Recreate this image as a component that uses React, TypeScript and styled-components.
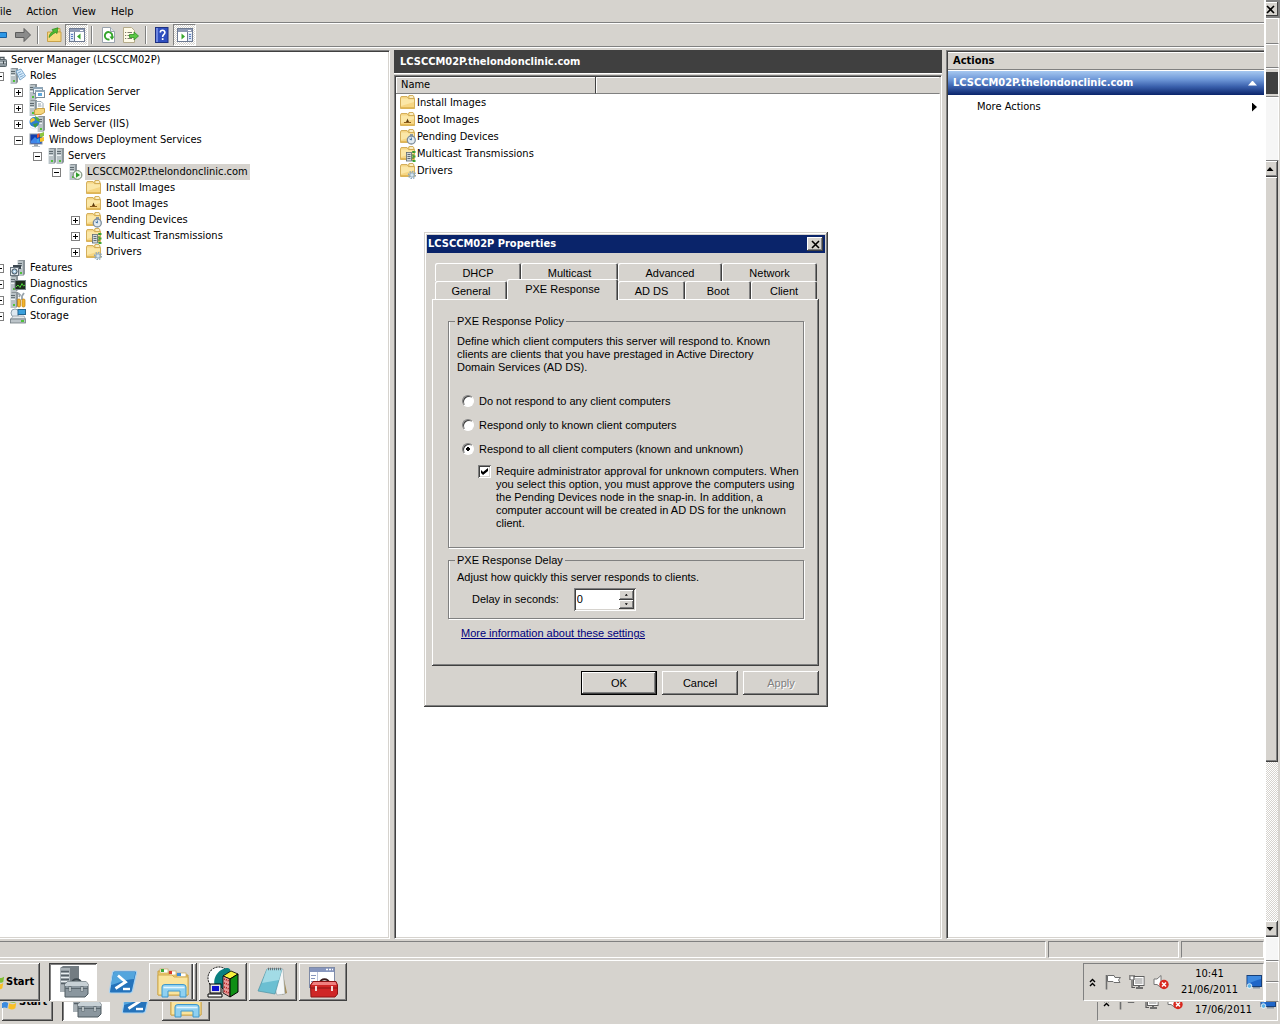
import React, { useId, useState } from "react";
import styled, { createGlobalStyle, css } from "styled-components";

/* ---------- theme ---------- */

const face = "#d6d3ce";
const shadow = "#808080";
const dark = "#404040";
const uiFont = `"DejaVu Sans Condensed", "DejaVu Sans", sans-serif`;
const dialogFont = `"Liberation Sans", Arial, sans-serif`;

const raised = css`
  box-shadow: inset -1px -1px 0 ${dark}, inset 1px 1px 0 #fff, inset -2px -2px 0 ${shadow};
`;
const sunkenThin = css`
  border: 1px solid;
  border-color: ${shadow} #fff #fff ${shadow};
`;
const checker = css`
  background: repeating-conic-gradient(#fff 0% 25%, ${face} 0% 50%) 0 0 / 2px 2px;
`;

const GlobalStyle = createGlobalStyle`
  *, *::before, *::after { box-sizing: border-box; }
  body {
    margin: 0;
    background: ${face};
    color: #000;
    font: 11px/16px ${uiFont};
  }
  button, input { font: inherit; color: inherit; }
  ul { list-style: none; margin: 0; padding: 0; }
  svg { display: block; flex: none; }
`;

/* ---------- icons ---------- */

type IconProps = { size?: number };

const Svg = ({ size = 16, box = 16, children }: { size?: number; box?: number; children: React.ReactNode }) => (
  <svg width={size} height={size} viewBox={`0 0 ${box} ${box}`} aria-hidden="true">
    {children}
  </svg>
);

const Tower = ({ x = 0, y = 0 }: { x?: number; y?: number }) => (
  <g transform={`translate(${x} ${y})`}>
    <path d="M0 1 L2 0 H8 V14 L6 16 H0Z" fill="#8b9499" />
    <rect x="0" y="1" width="6" height="15" fill="#b9c2c6" />
    <rect x="0" y="1" width="1" height="15" fill="#dfe6e8" />
    <rect x="1" y="3" width="4" height="1" fill="#5d686e" />
    <rect x="1" y="5" width="4" height="1" fill="#6d787e" />
    <rect x="1" y="7" width="4" height="1" fill="#eef2f3" />
    <rect x="3" y="12" width="2" height="2" fill="#4fc23a" />
  </g>
);

const FolderBase = () => (
  <>
    <path d="M8 4 V2 L9 .5 H13 L14 2 V5 H8Z" fill="#f3d98a" stroke="#c9a24a" strokeWidth=".8" />
    <rect x="10" y="1.500" width="3" height="1" fill="#fff" />
    <path d="M.5 3 L1.2 1.500 H7 L8.500 3.500 H14.500 V13.500 H.5Z" fill="#f6d684" stroke="#cfa850" strokeWidth=".9" />
    <path d="M1 3.500 H8 L8.500 4.500 H14 V7 L1 11Z" fill="#fdebb0" opacity=".8" />
    <path d="M1 13.500 H14.500 V12 H1Z" fill="#e3b957" />
  </>
);

const FolderIcon = () => <Svg><FolderBase /></Svg>;
const BootFolderIcon = () => (
  <Svg>
    <FolderBase />
    <path d="M7.5 6.5 L9 10 H6Z" fill="#5b3a10" />
    <rect x="4" y="10" width="7" height="1" fill="#8a5a18" />
  </Svg>
);
const PendingFolderIcon = () => (
  <Svg>
    <FolderBase />
    <rect x="10" y="5" width="3" height="2" fill="#8a98a4" />
    <circle cx="11.3" cy="11" r="4" fill="#e1eaf1" stroke="#7d8d9c" strokeWidth="1.3" />
    <path d="M11.3 8.5 V11 L9.5 10" stroke="#3b6da0" fill="none" />
  </Svg>
);
const MulticastFolderIcon = () => (
  <Svg>
    <FolderBase />
    <rect x="6.500" y="6.500" width="5" height="8.500" fill="#d3d9dc" stroke="#5f6b72" strokeWidth=".8" />
    <path d="M7.500 8.500 H10.500 M7.500 10.500 H10.500 M7.500 12.500 H10.500" stroke="#5f6b72" />
    <path d="M12.500 6 H15.500 M12.500 10.500 H15.500 M12.500 15 H15.500" stroke="#3fa534" strokeWidth="2" />
    <path d="M13 5 V15" stroke="#2d7f26" strokeDasharray="2 1" />
  </Svg>
);
const DriversFolderIcon = () => (
  <Svg>
    <FolderBase />
    <circle cx="12" cy="12" r="3.4" fill="none" stroke="#8aa7be" strokeWidth="1.4" strokeDasharray="1.5 1.1" />
    <circle cx="12" cy="12" r="2.2" fill="#d5e4ef" stroke="#8aa7be" />
  </Svg>
);
const ServerManagerIcon = () => (
  <Svg>
    <rect x="1" y="1" width="6" height="11" fill="#a7b0b5" />
    <path d="M9 7 V5.5 H13 V7" fill="none" stroke="#4f5a60" strokeWidth="1.3" />
    <rect x="5.5" y="7.5" width="10" height="7" rx="1" fill="#8d989e" stroke="#59646a" />
    <path d="M6 10.5 H15" stroke="#c9d1d5" />
    <path d="M8.5 9 V12 M12.5 9 V12" stroke="#414b50" />
  </Svg>
);
const RolesIcon = () => (
  <Svg>
    <Tower />
    <path d="M6 3 L11 1 L15.5 8 L10 12Z" fill="#d9ecfb" stroke="#6f9fc8" strokeWidth=".9" />
    <path d="M8 5 L11 3.5 M9 7 L12.5 5.5 M10 9 L13.5 7.5" stroke="#6f9fc8" strokeWidth=".9" />
  </Svg>
);
const AppServerIcon = () => (
  <Svg>
    <Tower />
    <rect x="4.5" y="3.5" width="9" height="6" fill="#eef5fa" stroke="#7b8d9b" />
    <rect x="4" y="3" width="10" height="2" fill="#8fa6b8" />
    <rect x="6.5" y="6.5" width="9" height="7" fill="#fff" stroke="#7b8d9b" />
    <rect x="6" y="6" width="10" height="2" fill="#8fa6b8" />
    <rect x="9" y="9" width="4" height="3" fill="#5ea9de" />
  </Svg>
);
const FileServicesIcon = () => (
  <Svg>
    <Tower />
    <path d="M7.5 1.5 H12 L14 3.5 V10 H7.5Z" fill="#fff" stroke="#90a0ac" strokeWidth=".9" />
    <path d="M9 4 H12 M9 6 H12.5" stroke="#90a0ac" />
    <path d="M5.5 10 L9 8.500 H15.5 V12.500 L12 14.5 H5.5Z" fill="#f6d67c" stroke="#c39a3c" strokeWidth=".9" />
  </Svg>
);
const WebServerIcon = () => (
  <Svg>
    <Tower x={8} />
    <circle cx="5.5" cy="6" r="5" fill="#2c7fd0" />
    <path d="M2 3 C4 1 6 2 6 4 C5 6 3 5 2 7 C1 6 1 4 2 3Z" fill="#f6c635" />
    <path d="M6 0 C9 1 11 3 10.5 6 L7 4Z" fill="#4fae3c" />
    <path d="M4 8 L9 7 L8 10 L6 12Z" fill="#3c9a46" />
    <path d="M1 11 C5 14 8 13 9 11" stroke="#dfe9f2" fill="none" />
  </Svg>
);
const WdsIcon = () => (
  <Svg>
    <rect x="1" y="2" width="12" height="10" fill="#123fae" stroke="#8d9aa8" />
    <path d="M2 9 L6 5 L12 11 H2Z" fill="#3f86ea" />
    <path d="M8 2.5 L10.5 1 V5 L8 6Z" fill="#e8542c" />
    <path d="M11 1.5 L15 0 V4 L11 5.5Z" fill="#8cc63e" />
    <path d="M8 7 L10.5 6 V10 L8 10.5Z" fill="#3fa3ea" />
    <path d="M11 6 L15 5 V9 L11 10Z" fill="#f8c22c" />
    <rect x="5" y="12" width="4" height="2" fill="#98a3ad" />
    <rect x="3" y="14" width="8" height="1" fill="#b9c2c9" />
  </Svg>
);
const ServersIcon = () => (
  <Svg>
    <Tower />
    <Tower x={8} />
  </Svg>
);
const HostIcon = () => (
  <Svg>
    <Tower x={2} />
    <circle cx="10.5" cy="11" r="4.4" fill="#eef8ec" stroke="#6b7f6b" />
    <path d="M9 8.3 L13 11 L9 13.7Z" fill="#2c9c28" />
  </Svg>
);
const FeaturesIcon = () => (
  <Svg>
    <Tower x={7} />
    <rect x="3" y="5" width="8" height="4" fill="#3c4750" />
    <rect x=".5" y="7.5" width="8" height="8" fill="#e5eaee" stroke="#66737d" />
    <circle cx="4.5" cy="11.5" r="2.6" fill="#a9cbe3" stroke="#3d4b56" />
    <circle cx="4.5" cy="11.5" r=".8" fill="#fff" />
  </Svg>
);
const DiagnosticsIcon = () => (
  <Svg>
    <Tower />
    <rect x="5" y="4.500" width="10.500" height="9" fill="#1c2b1c" stroke="#7a868c" />
    <path d="M6 11 L8 9 L10 11.5 L12 7.5 L13.5 10 L15 9" fill="none" stroke="#4ed43a" />
  </Svg>
);
const ConfigurationIcon = () => (
  <Svg>
    <Tower />
    <path d="M8 1 L10 3 L9 5 M14 1 L12 4 V8" stroke="#98a3aa" strokeWidth="1.8" fill="none" />
    <rect x="7.5" y="7" width="3" height="8" rx="1.2" fill="#f4b52c" stroke="#b97d12" strokeWidth=".7" />
    <rect x="12" y="7" width="3" height="8" rx="1.2" fill="#f4b52c" stroke="#b97d12" strokeWidth=".7" />
  </Svg>
);
const StorageIcon = () => (
  <Svg>
    <circle cx="5" cy="5" r="4" fill="#dfe9f0" stroke="#8fa1ad" />
    <rect x="8" y="1.5" width="7.5" height="5" fill="#3aa0dc" stroke="#24668f" />
    <path d="M1 11 L3 8 H14 L15.5 11Z" fill="#e4e8ea" stroke="#8d979d" strokeWidth=".7" />
    <rect x=".5" y="11" width="15" height="4" fill="#bcc4c9" stroke="#6e7a81" strokeWidth=".8" />
    <rect x="11" y="12" width="3" height="2" fill="#4fc23a" />
  </Svg>
);

/* toolbar icons */
const BackIcon = () => (
  <Svg><path d="M1 8 L7 2 V5.5 H14.5 V10.5 H7 V14Z" fill="#2d97e6" stroke="#1a5fa0" /></Svg>
);
const ForwardIcon = () => (
  <Svg><path d="M15.5 8 L9 1.500 V5.5 H.5 V10.5 H9 V14.500Z" fill="#8b8b8b" stroke="#5c5c5c" /></Svg>
);
const UpFolderIcon = () => (
  <Svg>
    <path d="M9 4 V2.500 L10 1.5 H14 V5 H9Z" fill="#f3d98a" stroke="#c9a24a" />
    <path d="M1.5 5 H15 V14.5 H1.5Z" fill="#f8d880" stroke="#c9a24a" />
    <path d="M3 10.500 C3.500 7 5 5 7.500 4.500 L6 2.500 L12 .8 L11 6.500 L9.500 5.500 C7 6.500 5.500 8.500 3 10.500Z" fill="#4dbb34" stroke="#2c8a1e" strokeWidth=".7" />
  </Svg>
);
const PaneIcon = ({ right }: { right?: boolean }) => (
  <Svg>
    <rect x=".5" y="1.5" width="15" height="13" fill="#fff" stroke="#6f7b93" />
    <rect x="1" y="2" width="14" height="3" fill="#8f9bb5" />
    <rect x="11" y="3" width="3" height="1" fill="#fff" />
    <rect x={right ? 11 : 1} y="6" width="4" height="8" fill="#dde7f5" />
    <path d={right ? "M10.5 5 V14" : "M5.5 5 V14"} stroke="#6f7b93" />
    <path d={right ? "M12 7.5 H14 M12 9.5 H14 M12 11.5 H14" : "M2 7.5 H4 M2 9.5 H4 M2 11.5 H4"} stroke="#5d7fc4" />
    <path d={right ? "M4.500 6.5 L8 9.5 L4.500 12.5Z" : "M11.5 6.5 L8 9.5 L11.5 12.5Z"} fill="#38a82c" />
  </Svg>
);
const RefreshIcon = () => (
  <Svg>
    <path d="M2.5 .5 H10.5 L14.5 4.5 V15.5 H2.5Z" fill="#fff" stroke="#9aa3ad" />
    <path d="M10.5 .5 V4.5 H14.5" fill="#e2e7ec" stroke="#9aa3ad" />
    <path d="M9.500 12.300 A3.700 3.700 0 1 1 12 10" fill="none" stroke="#35a52c" strokeWidth="1.9" />
    <path d="M9.500 9.500 H14.300 L12 13Z" fill="#35a52c" />
  </Svg>
);
const ExportIcon = () => (
  <Svg>
    <path d="M.5 .5 H8.5 L11.5 3.5 V15.5 H.5Z" fill="#fffbe8" stroke="#b5ab8a" />
    <path d="M2 5.5 H3.2 M4.5 5.5 H9 M2 8.5 H3.2 M4.5 8.5 H7 M2 11.5 H3.2 M4.5 11.5 H9" stroke="#7d7a6c" />
    <path d="M6.5 7.5 H11 V5 L15.5 9 L11 13 V10.5 H6.5Z" fill="#5cc845" stroke="#2f8f22" strokeWidth=".8" />
  </Svg>
);
const HelpIcon = () => (
  <Svg>
    <rect x="1.500" y=".5" width="12.500" height="15" fill="#2f4fc0" stroke="#1c2f80" />
    <rect x="2" y="1" width="2" height="14" fill="#6d86e0" />
    <path d="M6.3 5.5 C6.3 2.6 10.900 2.6 10.900 5.4 C10.900 7.4 8.600 7.4 8.600 10" fill="none" stroke="#fff" strokeWidth="1.6" />
    <rect x="7.800" y="11.2" width="1.7" height="1.8" fill="#fff" />
  </Svg>
);

/* taskbar icons */
const ServerToolboxIcon = ({ size = 32 }: IconProps) => (
  <Svg size={size} box={32}>
    <path d="M3 2 L6 0 H22 V22 L18 26 H3Z" fill="#737c82" />
    <rect x="3" y="2" width="10" height="24" fill="#a9b1b6" />
    <path d="M4 5.5 H12 M4 9.5 H12 M4 13.5 H12 M4 17.5 H12" stroke="#566067" strokeWidth="1.5" />
    <path d="M4 7.5 H12 M4 11.5 H12 M4 15.5 H12" stroke="#e8edef" />
    <path d="M15 17 C15 12 24 12 24 17" fill="none" stroke="#3e484e" strokeWidth="2" />
    <path d="M8 18 L11 15.500 H29 L31 18 V28 L28 31 H8Z" fill="#8a969e" stroke="#4e5a61" />
    <path d="M8 18 L11 15.500 H29 L31 18 V20 H8Z" fill="#c8d1d6" />
    <path d="M8 22.5 H31" stroke="#5b676e" />
    <rect x="12" y="20.500" width="2" height="5" fill="#e4eaec" stroke="#4e5a61" strokeWidth=".6" />
    <rect x="24" y="20.500" width="2" height="5" fill="#e4eaec" stroke="#4e5a61" strokeWidth=".6" />
  </Svg>
);
const PowerShellIcon = ({ size = 32 }: IconProps) => (
  <Svg size={size} box={32}>
    <path d="M7.5 5 H28 Q30 5 29.5 7 L25.5 25 Q25 27 23 27 H4 Q2 27 2.5 25 L5.5 7 Q6 5 7.5 5Z" fill="#2573bb" stroke="#a9d3f2" strokeWidth="1.2" />
    <path d="M7.5 6 H28.4 L27 13 C19 13 12 17 4 19 L6.4 7Z" fill="#5fb1e6" opacity=".8" />
    <path d="M11 9.5 L18.5 16 L8.5 22.5" fill="none" stroke="#fff" strokeWidth="2.8" />
    <path d="M16 23 H23" stroke="#fff" strokeWidth="2.4" />
  </Svg>
);
const ExplorerIcon = ({ size = 32 }: IconProps) => (
  <Svg size={size} box={32}>
    <path d="M1 5 H9 L11 7 H17 L19 9 H31 V29 H1Z" fill="#efce72" stroke="#c79f45" />
    <rect x="3" y="3" width="8" height="4" fill="#fff" stroke="#c79f45" strokeWidth=".6" />
    <rect x="4" y="3" width="3" height="3" fill="#38a838" />
    <rect x="12" y="5" width="7" height="4" fill="#fff" stroke="#c79f45" strokeWidth=".6" />
    <rect x="12" y="5" width="3" height="3" fill="#d83a2a" />
    <rect x="20" y="7" width="9" height="4" fill="#fff" stroke="#c79f45" strokeWidth=".6" />
    <rect x="20" y="7" width="4" height="3" fill="#3b8ddc" />
    <path d="M1 9 H15 L17 11 H31 V29 H1Z" fill="#fae49d" stroke="#d0aa50" />
    <path d="M5 31 V21 Q5 18.5 8 18.5 H26 Q29 18.5 29 21 V31 H23 V25 H11 V31Z" fill="#8fd0f0" stroke="#3f98cc" />
    <path d="M6.5 21.5 H27.5" stroke="#e3f6ff" strokeWidth="1.6" />
  </Svg>
);
const MmcIcon = ({ size = 32 }: IconProps) => (
  <Svg size={size} box={32}>
    <circle cx="12" cy="12" r="11" fill="#fff" stroke="#000" strokeDasharray="2 1" />
    <path d="M8 20 C5 12 12 2 21 2 C27 4 20 10 20 14 V22 H10Z" fill="#0b8080" />
    <path d="M16 10 L24 5 L31 8 L23 13Z" fill="#f6f23c" stroke="#000" strokeWidth=".8" />
    <path d="M16 10 L23 13 V31 L16 27Z" fill="#e89a9a" stroke="#000" strokeWidth=".8" />
    <path d="M17 13 L22 15 M17 17 L22 19 M17 21 L22 23 M17 25 L22 27" stroke="#b01818" strokeWidth="1.6" strokeDasharray="1 1" />
    <path d="M23 13 L31 8 V26 L23 31Z" fill="#0f8f14" stroke="#000" />
    <rect x="3" y="18" width="11" height="9" fill="#e4e4e4" stroke="#000" />
    <rect x="5" y="20" width="7" height="5" fill="#1010d0" />
    <path d="M1 28 H15 V31 H1Z" fill="#fff" stroke="#000" />
  </Svg>
);
const NotepadIcon = ({ size = 32 }: IconProps) => (
  <Svg size={size} box={32}>
    <path d="M25 4 L30 27 L25 29Z" fill="#a28a54" />
    <path d="M11 3 H26 L28 28 L20 29Z" fill="#f4f6f7" stroke="#9ba5aa" strokeWidth=".6" />
    <path d="M10 3 H25 L18 28 L1 25Z" fill="#6bbfd2" stroke="#4f92a4" strokeWidth=".7" />
    <path d="M10 3 H25 L22 14 L5 17Z" fill="#b4e4ec" opacity=".75" />
    <path d="M11 3 H25" stroke="#6b7277" strokeWidth="2.4" strokeDasharray="1 1" />
  </Svg>
);
const RedToolboxIcon = ({ size = 32 }: IconProps) => (
  <Svg size={size} box={32}>
    <rect x="2.5" y="1.5" width="25" height="20" fill="#fff" stroke="#7e8aa6" />
    <rect x="3" y="2" width="24" height="4" fill="#8796bd" />
    <path d="M19 3.5 H21 M22 3.5 H24 M25 3.5 H26" stroke="#fff" strokeWidth="1.4" />
    <path d="M4 9.5 H9 M4 12.5 H8 M4 15.5 H9" stroke="#8796bd" />
    <path d="M10.5 6 V20" stroke="#bcc5da" />
    <path d="M13 17 C13 12 22 12 22 17" fill="none" stroke="#3a1d1d" strokeWidth="2" />
    <path d="M3.500 19 L6 15.500 H29 L30.500 19 V28 L28 31 H4Z" fill="#cf2626" stroke="#8c1414" />
    <path d="M4.500 19 L6.500 16 H28.500 L29.500 19Z" fill="#f08080" />
    <path d="M4 22 H30" stroke="#8c1414" />
    <rect x="8" y="20" width="2" height="5" fill="#f2dcdc" />
    <rect x="24" y="20" width="2" height="5" fill="#f2dcdc" />
  </Svg>
);
const StartLogo = () => (
  <Svg size={16} box={18}>
    <path d="M1 3 C4 1 6 2 8 3 L7 9 C5 8 3 7 0 9Z" fill="#e8502a" />
    <path d="M9 3.5 C12 5 14 5 17 3 L16 9 C13 10.500 11 10 8 9Z" fill="#7fbf35" />
    <path d="M0 10 C3 8.500 5 9 7 10 L6 16 C4 15 2 14.500 0 16Z" fill="#3c8be0" />
    <path d="M8 10.500 C11 12 13 12 16 10 L15 16 C12 18 9 17.500 7 16Z" fill="#f9bf26" />
  </Svg>
);

/* tray icons */
const ChevronsIcon = () => (
  <Svg size={9} box={9}>
    <path d="M2 4 L4.500 1.500 L7 4 M2 8 L4.500 5.500 L7 8" fill="none" stroke="#000" strokeWidth="1.400" />
  </Svg>
);
const FlagIcon = () => (
  <Svg>
    <path d="M1.500 1 V15.500" stroke="#6e6e6e" strokeWidth="1.600" />
    <path d="M2.500 1.500 H9 L10 3.500 H15.500 L13.500 6 L15 8.500 H9 L8 7.500 H2.500Z" fill="#fff" stroke="#6e6e6e" />
  </Svg>
);
const NetworkIcon = () => (
  <Svg>
    <rect x="4.500" y="2.500" width="10.500" height="9" fill="#c4c4c4" stroke="#5f5f5f" />
    <rect x="5.500" y="3.500" width="8.500" height="7" fill="none" stroke="#fff" />
    <path d="M7 14 H14" stroke="#6e6e6e" strokeWidth="2" />
    <path d="M10 12 V14" stroke="#6e6e6e" strokeWidth="2" />
    <path d="M1 1 V5.500 H5 V1 M3 1 V13.500 H6" fill="none" stroke="#555" strokeWidth="1.200" />
    <rect x="1.600" y="2.500" width="2.800" height="3" fill="#fff" />
  </Svg>
);
const VolumeIcon = () => (
  <Svg>
    <path d="M1 5 H4 L8 1.500 V13.500 L4 10.500 H1Z" fill="#fff" stroke="#777" />
    <circle cx="11" cy="10.500" r="4.700" fill="#d8281e" />
    <path d="M9 8.500 L13 12.500 M13 8.500 L9 12.500" stroke="#fff" strokeWidth="1.500" />
  </Svg>
);
const DesktopIcon = () => (
  <Svg>
    <rect x="1" y="1.500" width="14.500" height="11" fill="#1f66c8" stroke="#173f78" />
    <path d="M1.500 2 H15 V5 C10 6 6 8 1.500 10Z" fill="#3f8ae0" />
    <circle cx="3.500" cy="12" r="2.300" fill="#5fb6e8" stroke="#fff" strokeWidth=".8" />
    <rect x="7" y="13" width="7" height="1.500" fill="#8b97a3" />
  </Svg>
);

/* ---------- shell ---------- */

const Desktop = styled.div`
  display: grid;
  grid-template-columns: minmax(0, 1fr) 16px;
  grid-template-rows: minmax(0, 1fr) 22px;
  height: 100vh;
  min-height: 740px;
  overflow: hidden;
`;

const Session = styled.main`
  display: flex;
  flex-direction: column;
  min-width: 0;
  overflow: hidden;
  background: ${face};
`;

const MenuBar = styled.nav`
  display: flex;
  align-items: center;
  gap: 15px;
  height: 24px;
  margin-left: -5px;
  border-bottom: 1px solid #fff;
  box-shadow: inset 0 -1px 0 ${shadow};
`;

const MenuItem = styled.button`
  padding: 0;
  border: 0;
  background: none;
`;

const ToolBar = styled.div`
  display: flex;
  align-items: center;
  height: 24px;
  padding-bottom: 2px;
  margin-left: -12px;
  border-bottom: 1px solid #fff;
  box-shadow: inset 0 -1px 0 ${shadow};
`;

const ToolButton = styled.button<{ $on?: boolean }>`
  display: grid;
  place-items: center;
  width: 23px;
  height: 22px;
  padding: 0;
  border: 1px solid transparent;
  background: none;
  ${(p) =>
    p.$on &&
    css`
      ${checker}
      border-color: ${shadow} #fff #fff ${shadow};
    `}
`;

const ToolSeparator = styled.span`
  width: 8px;
  height: 18px;
  display: flex;
  justify-content: center;
  &::before {
    content: "";
    width: 2px;
    background: ${shadow};
    border-right: 1px solid #fff;
  }
`;

const Panes = styled.div`
  flex: 1;
  display: grid;
  grid-template-columns: 390px minmax(0, 1fr) 318px;
  gap: 4px;
  min-height: 0;
  padding-top: 2px;
`;

const Pane = styled.section`
  display: flex;
  flex-direction: column;
  min-width: 0;
  padding: 1px;
  overflow: hidden;
  background: #fff;
  border: 1px solid;
  border-color: ${shadow} #fff #fff ${shadow};
  box-shadow: inset 1px 1px 0 ${dark}, inset -1px -1px 0 ${face};
`;

const TreePane = styled(Pane)`
  border-left: 0;
  padding-left: 0;
  box-shadow: inset 0 1px 0 ${dark}, inset -1px -1px 0 ${face};
`;

const ActionsPane = styled(Pane)`
  border-right: 0;
  padding-right: 0;
  box-shadow: inset 1px 1px 0 ${dark}, inset 0 -1px 0 ${face};
`;

/* ---------- tree ---------- */

const TreeRoot = styled.ul`
  margin-left: -28px;
`;
const Branch = styled.ul`
  padding-left: 19px;
`;
const TreeRow = styled.div`
  display: flex;
  align-items: center;
  height: 16px;
`;
const ExpanderSlot = styled.span`
  display: flex;
  width: 19px;
  padding-left: 4px;
`;
const Expander = styled.button<{ $open?: boolean }>`
  width: 9px;
  height: 9px;
  padding: 0;
  border: 1px solid ${shadow};
  background: linear-gradient(#000, #000) center / 5px 1px no-repeat,
    linear-gradient(#000, #000) center / ${(p) => (p.$open ? "0 0" : "1px 5px")} no-repeat, #fff;
`;
const TreeLabel = styled.span<{ $selected?: boolean }>`
  height: 16px;
  padding: 0 2px;
  margin-left: 2px;
  white-space: nowrap;
  background: ${(p) => (p.$selected ? face : "transparent")};
`;

type Node = {
  label: string;
  icon: React.ReactNode;
  expandable?: boolean;
  selected?: boolean;
  children?: Node[];
};

const tree: Node = {
  label: "Server Manager (LCSCCM02P)",
  icon: <ServerManagerIcon />,
  children: [
    {
      label: "Roles",
      icon: <RolesIcon />,
      expandable: true,
      children: [
        { label: "Application Server", icon: <AppServerIcon />, expandable: true },
        { label: "File Services", icon: <FileServicesIcon />, expandable: true },
        { label: "Web Server (IIS)", icon: <WebServerIcon />, expandable: true },
        {
          label: "Windows Deployment Services",
          icon: <WdsIcon />,
          expandable: true,
          children: [
            {
              label: "Servers",
              icon: <ServersIcon />,
              expandable: true,
              children: [
                {
                  label: "LCSCCM02P.thelondonclinic.com",
                  icon: <HostIcon />,
                  expandable: true,
                  selected: true,
                  children: [
                    { label: "Install Images", icon: <FolderIcon /> },
                    { label: "Boot Images", icon: <BootFolderIcon /> },
                    { label: "Pending Devices", icon: <PendingFolderIcon />, expandable: true },
                    { label: "Multicast Transmissions", icon: <MulticastFolderIcon />, expandable: true },
                    { label: "Drivers", icon: <DriversFolderIcon />, expandable: true },
                  ],
                },
              ],
            },
          ],
        },
      ],
    },
    { label: "Features", icon: <FeaturesIcon />, expandable: true },
    { label: "Diagnostics", icon: <DiagnosticsIcon />, expandable: true },
    { label: "Configuration", icon: <ConfigurationIcon />, expandable: true },
    { label: "Storage", icon: <StorageIcon />, expandable: true },
  ],
};

const TreeItem = ({ node }: { node: Node }) => {
  const [open, setOpen] = useState(Boolean(node.children));
  return (
    <li>
      <TreeRow>
        <ExpanderSlot>
          {node.expandable && (
            <Expander $open={open} aria-label={`Expand ${node.label}`} onClick={() => setOpen(!open)} />
          )}
        </ExpanderSlot>
        {node.icon}
        <TreeLabel $selected={node.selected}>{node.label}</TreeLabel>
      </TreeRow>
      {open && node.children && (
        <Branch>
          {node.children.map((child) => (
            <TreeItem key={child.label} node={child} />
          ))}
        </Branch>
      )}
    </li>
  );
};

/* ---------- list pane ---------- */

const ListColumn = styled.div`
  display: flex;
  flex-direction: column;
  gap: 1px;
  min-width: 0;
`;
const ListTitle = styled.h1`
  margin: 0;
  padding: 1px 6px 0;
  font-size: 11px;
  line-height: 22px;
  color: #fff;
  background: ${dark};
  border-bottom: 1px solid #fff;
`;
const ListPane = styled(Pane)`
  flex: 1;
`;
const ListTable = styled.table`
  width: 100%;
  border-collapse: separate;
  border-spacing: 0;
  table-layout: fixed;
`;
const HeadCell = styled.th<{ $width?: number }>`
  width: ${(p) => (p.$width ? `${p.$width}px` : "auto")};
  height: 17px;
  padding: 0 5px;
  font-weight: 400;
  line-height: 16px;
  text-align: left;
  background: ${face};
  border-right: 1px solid ${(p) => (p.$width ? dark : face)};
  border-bottom: 1px solid ${shadow};
  box-shadow: inset 1px 1px 0 #fff;
`;
const ListCell = styled.td`
  height: 17px;
  padding: 0 4px;
  line-height: 17px;
`;
const ListEntry = styled.div`
  display: flex;
  align-items: center;
  gap: 1px;
  white-space: nowrap;
`;

const listItems = [
  { label: "Install Images", icon: <FolderIcon /> },
  { label: "Boot Images", icon: <BootFolderIcon /> },
  { label: "Pending Devices", icon: <PendingFolderIcon /> },
  { label: "Multicast Transmissions", icon: <MulticastFolderIcon /> },
  { label: "Drivers", icon: <DriversFolderIcon /> },
];

/* ---------- actions pane ---------- */

const ActionsTitle = styled.h2`
  margin: 0;
  padding: 0 5px;
  font-size: 11px;
  line-height: 16px;
  background: ${face};
  border-top: 1px solid #fff;
  border-bottom: 1px solid ${shadow};
`;
const ActionsGroup = styled.button`
  display: flex;
  align-items: center;
  justify-content: space-between;
  height: 25px;
  padding: 0 7px 0 5px;
  border: 0;
  border-top: 1px solid #fff;
  font-weight: 700;
  color: #fff;
  background: linear-gradient(#a6c8f0, #6f98d8 35%, #3a60ac 65%, #0a246a);
`;
const ActionItem = styled.button`
  display: flex;
  align-items: center;
  justify-content: space-between;
  height: 24px;
  padding: 0 7px 0 29px;
  border: 0;
  background: none;
`;
const Triangle = styled.span<{ $dir: "up" | "down" | "right"; $size?: number }>`
  --s: ${(p) => p.$size ?? 5}px;
  width: ${(p) => (p.$dir === "right" ? "var(--s)" : "calc(var(--s) * 2 - 1px)")};
  height: ${(p) => (p.$dir === "right" ? "calc(var(--s) * 2 - 1px)" : "var(--s)")};
  background: currentColor;
  clip-path: ${(p) =>
    ({
      up: "polygon(50% 0, 100% 100%, 0 100%)",
      down: "polygon(0 0, 100% 0, 50% 100%)",
      right: "polygon(0 0, 100% 50%, 0 100%)",
    })[p.$dir]};
`;

/* ---------- status bar ---------- */

const StatusBar = styled.footer`
  display: flex;
  gap: 2px;
  height: 22px;
  padding: 2px 0;
  border-bottom: 1px solid #fff;
`;
const StatusCell = styled.div<{ $width?: number }>`
  ${sunkenThin}
  ${(p) => (p.$width ? `width: ${p.$width}px;` : "flex: 1; border-left: 0;")}
`;

/* ---------- taskbar ---------- */

const TaskBar = styled.div`
  display: flex;
  height: 41px;
  padding-top: 2px;
  gap: 2px;
`;
const LowerTaskBar = styled(TaskBar)`
  grid-column: 1 / -1;
  height: 22px;
  padding: 0 2px 3px;
  align-items: flex-end;
  overflow: hidden;
`;
const StartButton = styled.button<{ $offset: number }>`
  display: flex;
  align-items: center;
  gap: 1px;
  width: 51px;
  height: 38px;
  flex: none;
  padding: 0;
  border: 0;
  margin: 0 7px 0 ${(p) => p.$offset}px;
  font-weight: 700;
  background: none;
  ${raised}
`;
const TaskButton = styled.button<{ $kind?: "active" | "flat" | "stack" }>`
  display: grid;
  place-items: center;
  width: 48px;
  height: 38px;
  flex: none;
  padding: 0;
  border: 0;
  background: none;
  ${raised}
  ${(p) =>
    p.$kind === "active" &&
    css`
      background: #fff;
      box-shadow: inset 1px 1px 0 ${dark}, inset -1px -1px 0 #fff, inset 2px 2px 0 ${shadow};
    `}
  ${(p) =>
    p.$kind === "flat" &&
    css`
      box-shadow: none;
    `}
  ${(p) =>
    p.$kind === "stack" &&
    css`
      background: linear-gradient(90deg, transparent 42px, ${shadow} 42px 43px, ${dark} 43px 44px, #fff 44px 45px, transparent 45px);
    `}
`;
const Tray = styled.div`
  display: flex;
  align-items: center;
  height: 38px;
  flex: none;
  margin-left: auto;
  padding: 0 1px 0 4px;
  gap: 8px;
  ${sunkenThin}
`;
const Clock = styled.time`
  width: 61px;
  padding-left: 4px;
  text-align: center;
  white-space: nowrap;
`;

/* ---------- window edge behind ---------- */

const EdgeStrip = styled.aside`
  display: flex;
  flex-direction: column;
  align-items: stretch;
  min-height: 0;
  border-left: 2px solid #fff;
  background: ${face};
`;
const EdgeTitle = styled.div`
  height: 18px;
  padding: 2px 2px 3px 0;
  background: ${shadow};
`;
const EdgeClose = styled.button`
  display: grid;
  place-items: center;
  width: 12px;
  height: 14px;
  padding: 0 3px 0 0;
  border: 0;
  background: ${face};
  box-shadow: inset -1px -1px 0 ${dark}, inset 0 1px 0 #fff;
`;
const EdgeBand = styled.div<{ $h: number; $tone?: string }>`
  flex: none;
  height: ${(p) => p.$h}px;
  margin-right: 1px;
  background: ${(p) => p.$tone ?? face};
  border-top: 1px solid #fff;
  border-right: 1px solid #fff;
  border-bottom: 1px solid ${shadow};
`;
const ScrollTrack = styled.div`
  flex: 1;
  display: flex;
  flex-direction: column;
  min-height: 0;
  margin-right: 2px;
  ${checker}
`;
const ScrollButton = styled.button`
  display: grid;
  place-items: center;
  flex: none;
  height: 16px;
  padding: 0 4px 0 0;
  border: 0;
  background: ${face};
  box-shadow: inset -1px -1px 0 ${dark}, inset 0 1px 0 #fff, inset -2px -2px 0 ${shadow};
`;
const ScrollThumb = styled.div`
  flex: 585;
  background: ${face};
  box-shadow: inset -1px -1px 0 ${dark}, inset 0 1px 0 #fff, inset -2px -2px 0 ${shadow};
`;
const ScrollRest = styled.div`
  flex: 159;
`;

/* ---------- dialog ---------- */

const DialogWindow = styled.div`
  position: absolute;
  left: 424px;
  top: 232px;
  width: 404px;
  padding: 3px;
  background: ${face};
  font: 11px/13px ${dialogFont};
  box-shadow: inset -1px -1px 0 ${dark}, inset 1px 1px 0 ${face}, inset -2px -2px 0 ${shadow}, inset 2px 2px 0 #fff;
`;
const DialogTitle = styled.header`
  display: flex;
  align-items: center;
  justify-content: space-between;
  height: 18px;
  padding: 0 2px 0 1px;
  font: 700 11px/18px ${uiFont};
  color: #fff;
  background: #0a246a;
`;
const CloseButton = styled.button`
  display: grid;
  place-items: center;
  width: 16px;
  height: 14px;
  padding: 0;
  border: 0;
  color: #000;
  background: ${face};
  ${raised}
`;
const CloseGlyph = () => (
  <Svg size={9} box={9}>
    <path d="M1 1 L8 8 M8 1 L1 8" stroke="#000" strokeWidth="1.600" />
  </Svg>
);

const DialogBody = styled.div`
  padding: 10px 6px 9px 5px;
`;
const TabRow = styled.div`
  display: flex;
  height: 18px;
  padding: 0 2px 0 3px;
`;
const Tab = styled.button<{ $grow: number; $active?: boolean }>`
  flex: ${(p) => p.$grow} 1 0;
  height: 18px;
  padding: 2px 0 0;
  border: 0;
  border-radius: 2px 2px 0 0;
  background: ${face};
  box-shadow: inset 1px 1px 0 #fff, inset -1px 0 0 ${dark}, inset -2px 0 0 ${shadow};
  ${(p) =>
    p.$active &&
    css`
      z-index: 1;
      height: 21px;
      margin-top: -2px;
      padding: 0 0 1px;
    `}
`;
const TabPanel = styled.div`
  padding: 16px 15px 26px 16px;
  box-shadow: inset -1px -1px 0 ${dark}, inset 1px 1px 0 #fff, inset -2px -2px 0 ${shadow};
`;
const Group = styled.fieldset`
  min-width: 0;
  margin: 0 0 6px;
  padding: 7px 4px 17px 8px;
  border: 1px solid ${shadow};
  box-shadow: 1px 1px 0 #fff, inset 1px 0 0 #fff;
`;
const CompactGroup = styled(Group)`
  margin: 0 0 8px;
  padding: 4px 8px 7px;
`;
const Legend = styled.legend`
  margin-left: -2px;
  padding: 0 2px;
  background: ${face};
`;
const Paragraph = styled.p`
  margin: 0;
  white-space: nowrap;
`;
const Choices = styled.div`
  display: flex;
  flex-direction: column;
  margin: 15px 0 4px 5px;
`;
const Choice = styled.label`
  display: flex;
  align-items: center;
  gap: 5px;
  height: 24px;
`;
const Radio = styled.input.attrs({ type: "radio" })`
  appearance: none;
  flex: none;
  width: 12px;
  height: 12px;
  margin: 0;
  border: 1px solid;
  border-color: ${shadow} #fff #fff ${shadow};
  border-radius: 50%;
  background: #fff;
  box-shadow: inset 1px 1px 0 ${dark};
  &:checked {
    background: radial-gradient(circle at 50% 50%, #000 0 2px, #fff 2px);
  }
`;
const Approval = styled.label`
  display: flex;
  gap: 5px;
  padding-left: 21px;
  white-space: nowrap;
`;
const CheckBox = styled.input.attrs({ type: "checkbox" })`
  appearance: none;
  flex: none;
  width: 13px;
  height: 13px;
  margin: 0;
  background: #fff;
  box-shadow: inset 1px 1px 0 ${shadow}, inset -1px -1px 0 #fff, inset 2px 2px 0 ${dark}, inset -2px -2px 0 ${face};
  &:checked::after {
    content: "";
    display: block;
    width: 7px;
    height: 7px;
    margin: 3px;
    background: #000;
    clip-path: polygon(0 29%, 29% 57%, 100% 0, 100% 43%, 29% 100%, 0 71%);
  }
`;
const DelayRow = styled.div`
  display: flex;
  align-items: center;
  gap: 15px;
  margin-top: 4px;
  padding-left: 15px;
`;
const Spinner = styled.div`
  display: flex;
  width: 62px;
  height: 23px;
  padding: 2px;
  background: #fff;
  box-shadow: inset 1px 1px 0 ${shadow}, inset -1px -1px 0 #fff, inset 2px 2px 0 ${dark}, inset -2px -2px 0 ${face};
`;
const SpinnerInput = styled.input`
  flex: 1;
  min-width: 0;
  height: 19px;
  padding: 0 0 2px 1px;
  border: 0;
  outline: 0;
  background: none;
`;
const SpinnerArrows = styled.div`
  display: grid;
  width: 15px;
`;
const SpinnerArrow = styled.button`
  display: grid;
  place-items: center;
  padding: 0;
  border: 0;
  background: ${face};
  ${raised}
`;
const InfoLink = styled.a`
  margin-left: 13px;
  color: #00007c;
`;
const DialogButtons = styled.div`
  display: flex;
  justify-content: flex-end;
  gap: 5px;
  padding-top: 5px;
`;
const DialogButton = styled.button<{ $primary?: boolean }>`
  width: 76px;
  height: 24px;
  padding: 0;
  border: ${(p) => (p.$primary ? "1px solid #000" : "0")};
  background: ${face};
  ${raised}
  &:disabled {
    color: ${shadow};
    text-shadow: 1px 1px 0 #fff;
  }
`;

const tabRows = [
  [
    { label: "DHCP", grow: 86 },
    { label: "Multicast", grow: 97 },
    { label: "Advanced", grow: 104 },
    { label: "Network", grow: 95 },
  ],
  [
    { label: "General", grow: 72 },
    { label: "PXE Response", grow: 111, active: true },
    { label: "AD DS", grow: 67 },
    { label: "Boot", grow: 66 },
    { label: "Client", grow: 66 },
  ],
];

const policies = [
  "Do not respond to any client computers",
  "Respond only to known client computers",
  "Respond to all client computers (known and unknown)",
];

const PropertiesDialog = () => {
  const [policy, setPolicy] = useState(policies[2]);
  const [approval, setApproval] = useState(true);
  const [delay, setDelay] = useState(0);
  const delayId = useId();
  return (
    <DialogWindow role="dialog" aria-label="LCSCCM02P Properties">
      <DialogTitle>
        LCSCCM02P Properties
        <CloseButton aria-label="Close">
          <CloseGlyph />
        </CloseButton>
      </DialogTitle>
      <DialogBody>
        {tabRows.map((row, i) => (
          <TabRow key={i} role="tablist">
            {row.map((tab) => (
              <Tab key={tab.label} role="tab" $grow={tab.grow} $active={"active" in tab}>
                {tab.label}
              </Tab>
            ))}
          </TabRow>
        ))}
        <TabPanel role="tabpanel">
          <Group>
            <Legend>PXE Response Policy</Legend>
            <Paragraph>
              Define which client computers this server will respond to. Known
              <br />
              clients are clients that you have prestaged in Active Directory
              <br />
              Domain Services (AD DS).
            </Paragraph>
            <Choices>
              {policies.map((p) => (
                <Choice key={p}>
                  <Radio name="policy" checked={policy === p} onChange={() => setPolicy(p)} />
                  {p}
                </Choice>
              ))}
            </Choices>
            <Approval>
              <CheckBox checked={approval} onChange={() => setApproval(!approval)} />
              <span>
                Require administrator approval for unknown computers. When
                <br />
                you select this option, you must approve the computers using
                <br />
                the Pending Devices node in the snap-in. In addition, a
                <br />
                computer account will be created in AD DS for the unknown
                <br />
                client.
              </span>
            </Approval>
          </Group>
          <CompactGroup>
            <Legend>PXE Response Delay</Legend>
            <Paragraph>Adjust how quickly this server responds to clients.</Paragraph>
            <DelayRow>
              <label htmlFor={delayId}>Delay in seconds:</label>
              <Spinner>
                <SpinnerInput
                  id={delayId}
                  value={delay}
                  onChange={(e) => setDelay(Number(e.target.value) || 0)}
                />
                <SpinnerArrows>
                  <SpinnerArrow aria-label="Increase" onClick={() => setDelay(delay + 1)}>
                    <Triangle $dir="up" $size={2} />
                  </SpinnerArrow>
                  <SpinnerArrow aria-label="Decrease" onClick={() => setDelay(Math.max(0, delay - 1))}>
                    <Triangle $dir="down" $size={2} />
                  </SpinnerArrow>
                </SpinnerArrows>
              </Spinner>
            </DelayRow>
          </CompactGroup>
          <InfoLink href="#settings">More information about these settings</InfoLink>
        </TabPanel>
        <DialogButtons>
          <DialogButton $primary>OK</DialogButton>
          <DialogButton>Cancel</DialogButton>
          <DialogButton disabled>Apply</DialogButton>
        </DialogButtons>
      </DialogBody>
    </DialogWindow>
  );
};

const TrayIcons = () => (
  <>
    <ChevronsIcon />
    <FlagIcon />
    <NetworkIcon />
    <VolumeIcon />
  </>
);

export default function App() {
  return (
    <>
      <GlobalStyle />
      <Desktop>
        <Session>
          <MenuBar>
            {["File", "Action", "View", "Help"].map((m) => (
              <MenuItem key={m}>{m}</MenuItem>
            ))}
          </MenuBar>
          <ToolBar>
            <ToolButton aria-label="Back"><BackIcon /></ToolButton>
            <ToolButton aria-label="Forward"><ForwardIcon /></ToolButton>
            <ToolSeparator />
            <ToolButton aria-label="Up one level"><UpFolderIcon /></ToolButton>
            <ToolButton $on aria-label="Console tree"><PaneIcon /></ToolButton>
            <ToolSeparator />
            <ToolButton aria-label="Refresh"><RefreshIcon /></ToolButton>
            <ToolButton aria-label="Export list"><ExportIcon /></ToolButton>
            <ToolSeparator />
            <ToolButton aria-label="Help topics"><HelpIcon /></ToolButton>
            <ToolButton $on aria-label="Action pane"><PaneIcon right /></ToolButton>
          </ToolBar>
          <Panes>
            <TreePane>
              <TreeRoot>
                <TreeItem node={tree} />
              </TreeRoot>
            </TreePane>
            <ListColumn>
              <ListTitle>LCSCCM02P.thelondonclinic.com</ListTitle>
              <ListPane>
                <ListTable>
                  <thead>
                    <tr>
                      <HeadCell $width={200}>Name</HeadCell>
                      <HeadCell aria-label="Details" />
                    </tr>
                  </thead>
                  <tbody>
                    {listItems.map((item) => (
                      <tr key={item.label}>
                        <ListCell>
                          <ListEntry>
                            {item.icon}
                            {item.label}
                          </ListEntry>
                        </ListCell>
                        <ListCell />
                      </tr>
                    ))}
                  </tbody>
                </ListTable>
              </ListPane>
            </ListColumn>
            <ActionsPane>
              <ActionsTitle>Actions</ActionsTitle>
              <ActionsGroup>
                LCSCCM02P.thelondonclinic.com
                <Triangle $dir="up" />
              </ActionsGroup>
              <ActionItem>
                More Actions
                <Triangle $dir="right" />
              </ActionItem>
            </ActionsPane>
          </Panes>
          <StatusBar>
            <StatusCell />
            <StatusCell $width={131} />
            <StatusCell $width={83} />
          </StatusBar>
          <TaskBar>
            <StartButton $offset={-11}>
              <StartLogo />
              Start
            </StartButton>
            <TaskButton $kind="active" aria-label="Server Manager"><ServerToolboxIcon /></TaskButton>
            <TaskButton $kind="flat" aria-label="PowerShell"><PowerShellIcon /></TaskButton>
            <TaskButton $kind="stack" aria-label="Explorer"><ExplorerIcon /></TaskButton>
            <TaskButton aria-label="Deployment Services"><MmcIcon /></TaskButton>
            <TaskButton aria-label="Notepad"><NotepadIcon /></TaskButton>
            <TaskButton aria-label="Management Console"><RedToolboxIcon /></TaskButton>
            <Tray>
              <TrayIcons />
              <Clock>
                10:41
                <br />
                21/06/2011
              </Clock>
              <DesktopIcon />
            </Tray>
          </TaskBar>
        </Session>
        <EdgeStrip aria-hidden="true">
          <EdgeTitle>
            <EdgeClose tabIndex={-1}>
              <CloseGlyph />
            </EdgeClose>
          </EdgeTitle>
          <EdgeBand $h={26} />
          <EdgeBand $h={24} />
          <EdgeBand $h={29} $tone={`linear-gradient(${face} 3px, ${dark} 3px 25px, ${face} 25px)`} />
          <EdgeBand $h={64} $tone="#f6f6f6" />
          <ScrollTrack>
            <ScrollButton tabIndex={-1}>
              <Triangle $dir="up" $size={4} />
            </ScrollButton>
            <ScrollThumb />
            <ScrollRest />
            <ScrollButton tabIndex={-1}>
              <Triangle $dir="down" $size={4} />
            </ScrollButton>
          </ScrollTrack>
          <EdgeBand $h={24} $tone="#f6f6f6" />
          <EdgeBand $h={21} />
          <EdgeBand $h={20} />
        </EdgeStrip>
        <LowerTaskBar>
          <StartButton $offset={0}>
            <StartLogo />
            Start
          </StartButton>
          <TaskButton $kind="active" aria-label="Server Manager"><ServerToolboxIcon /></TaskButton>
          <TaskButton $kind="flat" aria-label="PowerShell"><PowerShellIcon /></TaskButton>
          <TaskButton aria-label="Explorer"><ExplorerIcon /></TaskButton>
          <Tray>
            <TrayIcons />
            <Clock>
              <br />
              17/06/2011
            </Clock>
            <DesktopIcon />
          </Tray>
        </LowerTaskBar>
      </Desktop>
      <PropertiesDialog />
    </>
  );
}
